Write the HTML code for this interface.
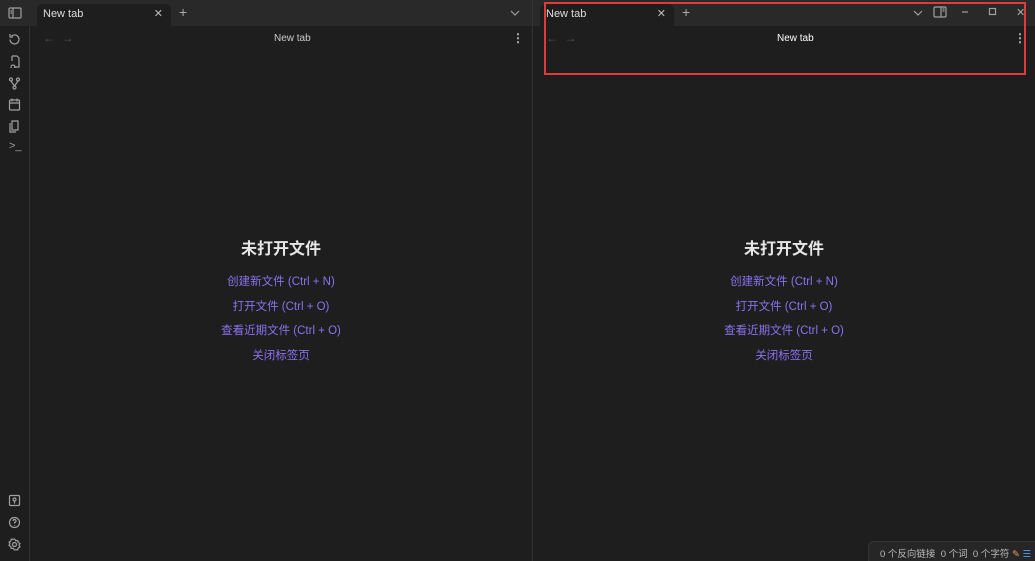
<!DOCTYPE html>
<html><head><meta charset="utf-8"><style>
*{margin:0;padding:0;box-sizing:border-box}
body{width:1035px;height:561px;background:#1e1e1e;font-family:"Liberation Sans","Noto Sans CJK SC",sans-serif;overflow:hidden;position:relative;color:#dadada}
.abs{position:absolute}
.strip{background:#292929}
.tab{background:#1e1e1e;border-radius:6px 6px 0 0;height:22px;font-size:11px;color:#dcddde;padding:4px 0 0 6px}
.x{position:absolute;right:8px;top:3px;font-size:11px;color:#bbb}
svg{position:absolute;stroke:#a0a0a0;fill:none;stroke-width:1.2}
.c{position:absolute;text-align:center}
h1{font-size:16px;font-weight:bold;color:#e6e6e6;margin-bottom:14px}
.c a{display:block;color:#8a72f0;font-size:11.5px;height:24.5px}
</style></head><body>
<div class="abs strip" style="left:0;top:0;width:532px;height:26px"></div>
<div class="abs strip" style="left:533px;top:0;width:502px;height:26px"></div>
<div class="abs" style="left:29px;top:26px;width:1px;height:535px;background:#333"></div>
<div class="abs" style="left:532px;top:0;width:1px;height:561px;background:#333"></div>
<div class="abs tab" style="left:37px;top:4px;width:134px">New tab<span class="x">✕</span></div>
<div class="abs" style="left:179px;top:4px;font-size:14px;color:#aaa">+</div>
<svg style="left:510px;top:8px" width="10" height="10"><path d="M1 3l4 4 4-4"/></svg>
<div class="abs tab" style="left:540px;top:4px;width:134px">New tab<span class="x">✕</span></div>
<div class="abs" style="left:682px;top:4px;font-size:14px;color:#aaa">+</div>
<svg style="left:913px;top:8px" width="10" height="10"><path d="M1 3l4 4 4-4"/></svg>
<svg style="left:933px;top:6px" width="14" height="13"><rect x="1" y="1" width="12" height="10" rx="1"/><path d="M8 1v10M9.5 3h2M9.5 5h2"/></svg>
<svg style="left:960px;top:6px" width="10" height="12"><path d="M2 6h6"/></svg>
<svg style="left:988px;top:7px" width="10" height="10"><rect x="1.5" y="1.5" width="6" height="6"/></svg>
<div class="abs" style="left:1016px;top:6px;font-size:11px;color:#aaa">✕</div>
<!-- nav -->
<div class="abs" style="left:43px;top:31px;font-size:12px;color:#555">←&nbsp;&nbsp;→</div>
<div class="abs" style="left:274px;top:33px;font-size:10px;color:#ccc">New tab</div>
<div class="abs" style="left:512px;top:31px;font-size:12px;color:#bbb;font-weight:bold">⋮</div>
<div class="abs" style="left:546px;top:31px;font-size:12px;color:#555">←&nbsp;&nbsp;→</div>
<div class="abs" style="left:777px;top:33px;font-size:10px;color:#fff">New tab</div>
<div class="abs" style="left:1014px;top:31px;font-size:12px;color:#bbb;font-weight:bold">⋮</div>
<div class="abs" style="left:544px;top:2px;width:482px;height:73px;border:2px solid #e03a3a"></div>
<!-- ribbon icons -->
<svg style="left:8px;top:7px" width="14" height="12"><rect x="1" y="1" width="12" height="10" rx="1"/><path d="M5 1v10M2.5 4h1.5M2.5 6h1.5"/></svg>
<svg style="left:8px;top:33px" width="13" height="13"><path d="M2 6.5a4.5 4.5 0 1 0 1.5-3.4M2 1v3h3"/></svg>
<svg style="left:8px;top:55px" width="13" height="13"><path d="M4 1h5l2 2v9H6M4 1v5M3 12a2 2 0 1 0 0-.1"/></svg>
<svg style="left:8px;top:77px" width="13" height="13"><circle cx="3" cy="2.5" r="1.5"/><circle cx="10" cy="2.5" r="1.5"/><circle cx="6.5" cy="10.5" r="1.5"/><path d="M3 4l3.5 5M10 4L6.5 9"/></svg>
<svg style="left:8px;top:98px" width="13" height="13"><rect x="1.5" y="2" width="10" height="10" rx="1"/><path d="M1.5 5h10M4 .5v3M9 .5v3"/></svg>
<svg style="left:8px;top:120px" width="13" height="13"><path d="M4 1h6v9H4zM2 3v9h6"/></svg>
<div class="abs" style="left:9px;top:140px;font-size:11px;color:#a0a0a0">&gt;_</div>
<svg style="left:8px;top:494px" width="13" height="13"><rect x="1.5" y="1.5" width="10" height="10" rx="1"/><circle cx="6.5" cy="5.5" r="1.5"/><path d="M6.5 7v2.5"/></svg>
<svg style="left:8px;top:516px" width="13" height="13"><circle cx="6.5" cy="6.5" r="5"/><path d="M5 5a1.5 1.5 0 1 1 1.5 1.5v1M6.5 9v.8"/></svg>
<svg style="left:8px;top:538px" width="13" height="13"><circle cx="6.5" cy="6.5" r="2"/><path d="M6.5 1l1.3 1.7 2-.2.4 2 1.8 1-1 1.7 1 1.7-1.8 1-.4 2-2-.2L6.5 12l-1.3-1.7-2 .2-.4-2-1.8-1 1-1.7-1-1.7 1.8-1 .4-2 2 .2z"/></svg>
<!-- content -->
<div class="c" style="left:181px;top:235px;width:200px"><h1>未打开文件</h1><a>创建新文件 (Ctrl + N)</a><a>打开文件 (Ctrl + O)</a><a>查看近期文件 (Ctrl + O)</a><a>关闭标签页</a></div>
<div class="c" style="left:684px;top:235px;width:200px"><h1>未打开文件</h1><a>创建新文件 (Ctrl + N)</a><a>打开文件 (Ctrl + O)</a><a>查看近期文件 (Ctrl + O)</a><a>关闭标签页</a></div>
<!-- status -->
<div class="abs" style="left:868px;top:541px;width:167px;height:20px;background:#262626;border:1px solid #333;border-right:0;border-bottom:0;border-radius:6px 0 0 0;font-size:9.5px;color:#bbb;padding:4px 0 0 11px;white-space:nowrap">0 个反向链接&nbsp;&nbsp;0 个词&nbsp;&nbsp;0 个字符 <span style="color:#e0a050">✎</span> <span style="color:#4a9eff">☰</span></div>
</body></html>
